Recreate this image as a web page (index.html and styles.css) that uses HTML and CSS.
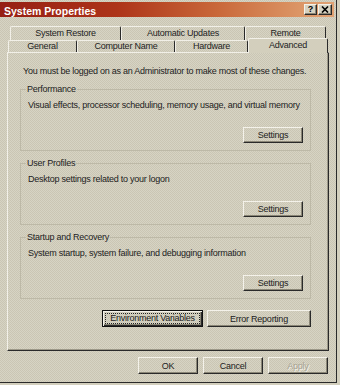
FILE: index.html
```html
<!DOCTYPE html>
<html>
<head>
<meta charset="utf-8">
<title>System Properties</title>
<link rel="stylesheet" href="styles.css">
</head>
<body>
<div class="window">
  <div class="titlebar">
    <span class="title">System Properties</span>
    <span class="caption-buttons">
      <span class="cap-btn help">?</span>
      <span class="cap-btn close"><svg width="8" height="7" viewBox="0 0 8 7"><path d="M1 0.5L7 6.5M7 0.5L1 6.5" stroke="#000" stroke-width="1.6"/></svg></span>
    </span>
  </div>
  <div class="tabs">
    <div class="tab-row back">
      <div class="tab t-restore">System Restore</div>
      <div class="tab t-updates">Automatic Updates</div>
      <div class="tab t-remote">Remote</div>
    </div>
    <div class="tab-row front">
      <div class="tab t-general">General</div>
      <div class="tab t-computer">Computer Name</div>
      <div class="tab t-hardware">Hardware</div>
      <div class="tab t-advanced selected">Advanced</div>
    </div>
  </div>
  <div class="panel">
    <p class="intro">You must be logged on as an Administrator to make most of these changes.</p>
    <fieldset class="group">
      <legend>Performance</legend>
      <p class="desc">Visual effects, processor scheduling, memory usage, and virtual memory</p>
      <div class="group-actions"><button class="btn">Settings</button></div>
    </fieldset>
    <fieldset class="group">
      <legend>User Profiles</legend>
      <p class="desc">Desktop settings related to your logon</p>
      <div class="group-actions"><button class="btn">Settings</button></div>
    </fieldset>
    <fieldset class="group">
      <legend>Startup and Recovery</legend>
      <p class="desc">System startup, system failure, and debugging information</p>
      <div class="group-actions"><button class="btn">Settings</button></div>
    </fieldset>
    <div class="panel-actions">
      <button class="btn wide focused"><span class="focus-ring">Environment Variables</span></button>
      <button class="btn wide err">Error Reporting</button>
    </div>
  </div>
  <div class="dialog-actions">
    <button class="btn dlg">OK</button>
    <button class="btn dlg">Cancel</button>
    <button class="btn dlg" disabled>Apply</button>
  </div>
</div>
</body>
</html>
```

FILE: styles.css
```css
* { box-sizing: border-box; }
html, body { margin: 0; padding: 0; }
body {
  width: 340px;
  height: 385px;
  overflow: hidden;
  background: #d3cfbd;
  font-family: "Liberation Sans", Arial, sans-serif;
  font-size: 9px;
  letter-spacing: -0.25px;
  color: #222;
}
.window {
  width: 337px;
  height: 383px;
  padding-top: 2px;
  border-right: 1px solid #2a2a2a;
  border-bottom: 1px solid #2a2a2a;
  background-color: #d3cfbd;
  background-image: repeating-conic-gradient(rgba(255,255,255,0.10) 0 25%, rgba(60,50,30,0.06) 0 50%);
  background-size: 2px 2px;
}
.titlebar {
  height: 15px;
  margin-right: 2px;
  padding: 0 2px 0 4px;
  display: flex;
  align-items: center;
  justify-content: space-between;
  background: linear-gradient(90deg, #961f14 0%, #ad3419 35%, #c9683a 65%, #dc9666 90%, #e0a274 100%);
}
.title {
  color: #fff;
  font-weight: bold;
  font-size: 10.5px;
  letter-spacing: 0;
  padding-top: 2px;
}
.caption-buttons { display: flex; gap: 1px; }
.cap-btn {
  width: 13px;
  height: 11px;
  display: flex;
  align-items: center;
  justify-content: center;
  background: #d6d2c2;
  border: 1px solid;
  border-color: #f4f2ea #2a2a2a #2a2a2a #f4f2ea;
  box-shadow: inset -1px -1px 0 #8a8676;
  font-weight: bold;
  font-size: 9px;
  letter-spacing: 0;
  color: #000;
  line-height: 9px;
}
.cap-btn.close { width: 14px; }
.tabs { margin-top: 9px; margin-left: 8px; }
.tab-row { display: flex; }
.tab-row.back { margin-left: 2px; height: 14px; }
.tab-row.front { height: 12px; align-items: flex-end; position: relative; z-index: 1; }
.tab {
  border-top: 1px solid #f2f0e8;
  border-left: 1px solid #f2f0e8;
  border-right: 1px solid #2a2a2a;
  border-radius: 2px 2px 0 0;
  text-align: center;
  line-height: 11px;
  white-space: nowrap;
}
.back .tab { height: 14px; padding-top: 1px; }
.front .tab { height: 12px; }
.front .tab.selected {
  height: 15px;
  padding-top: 1px;
  margin-bottom: -1px;
  background: #d3cfbd;
}
.t-restore { width: 111px; }
.t-updates { width: 124px; }
.t-remote { width: 81px; }
.t-general { width: 69px; }
.t-computer { width: 98px; }
.t-hardware { width: 73px; }
.t-advanced { width: 80px; }
.panel {
  margin-left: 7px;
  width: 322px;
  height: 299px;
  padding: 13px 0 0 12px;
  border: 1px solid;
  border-color: #f2f0e8 #2a2a2a #2a2a2a #f2f0e8;
  box-shadow: inset -1px -1px 0 #9c9888;
}
.intro { margin: 0 0 0 3px; line-height: 11px; }
.group {
  width: 291px;
  margin: 7px 0 0 0;
  padding: 5px 7px 7px 6px;
  border: 1px solid #bdb9a7;
  min-width: 0;
}
.group legend {
  padding: 0 1px;
  margin-left: -1px;
  line-height: 11px;
}
.desc { margin: 0 0 0 1px; line-height: 11px; }
.group-actions { display: flex; justify-content: flex-end; margin-top: 16px; }
.btn {
  font-family: "Liberation Sans", Arial, sans-serif;
  font-size: 9px;
  letter-spacing: -0.25px;
  color: #222;
  width: 60px;
  height: 16px;
  padding: 0;
  margin: 0;
  background: transparent;
  border: 1px solid;
  border-color: #f4f2ea #2a2a2a #2a2a2a #f4f2ea;
  box-shadow: inset -1px -1px 0 #8a8676;
  line-height: 12px;
  text-align: center;
}
.panel-actions {
  width: 291px;
  margin-top: 11px;
  display: flex;
  justify-content: flex-end;
  gap: 4px;
}
.btn.wide { width: 101px; height: 17px; }
.btn.err { width: 104px; }
.btn.focused {
  border: 1px solid #111;
  box-shadow: inset 1px 1px 0 #f4f2ea, inset -1px -1px 0 #2a2a2a, inset -2px -2px 0 #8a8676;
  padding: 3px;
}
.focus-ring {
  display: block;
  height: 9px;
  line-height: 9px;
  outline: 1px dotted #222;
  outline-offset: 0;
}
.dialog-actions {
  margin-top: 6px;
  display: flex;
  justify-content: flex-end;
  gap: 5px;
  padding-right: 8px;
}
.btn.dlg { width: 60px; height: 17px; }
.btn.dlg:disabled { color: #a6a292; text-shadow: 1px 1px 0 #f4f2ea; }
```
